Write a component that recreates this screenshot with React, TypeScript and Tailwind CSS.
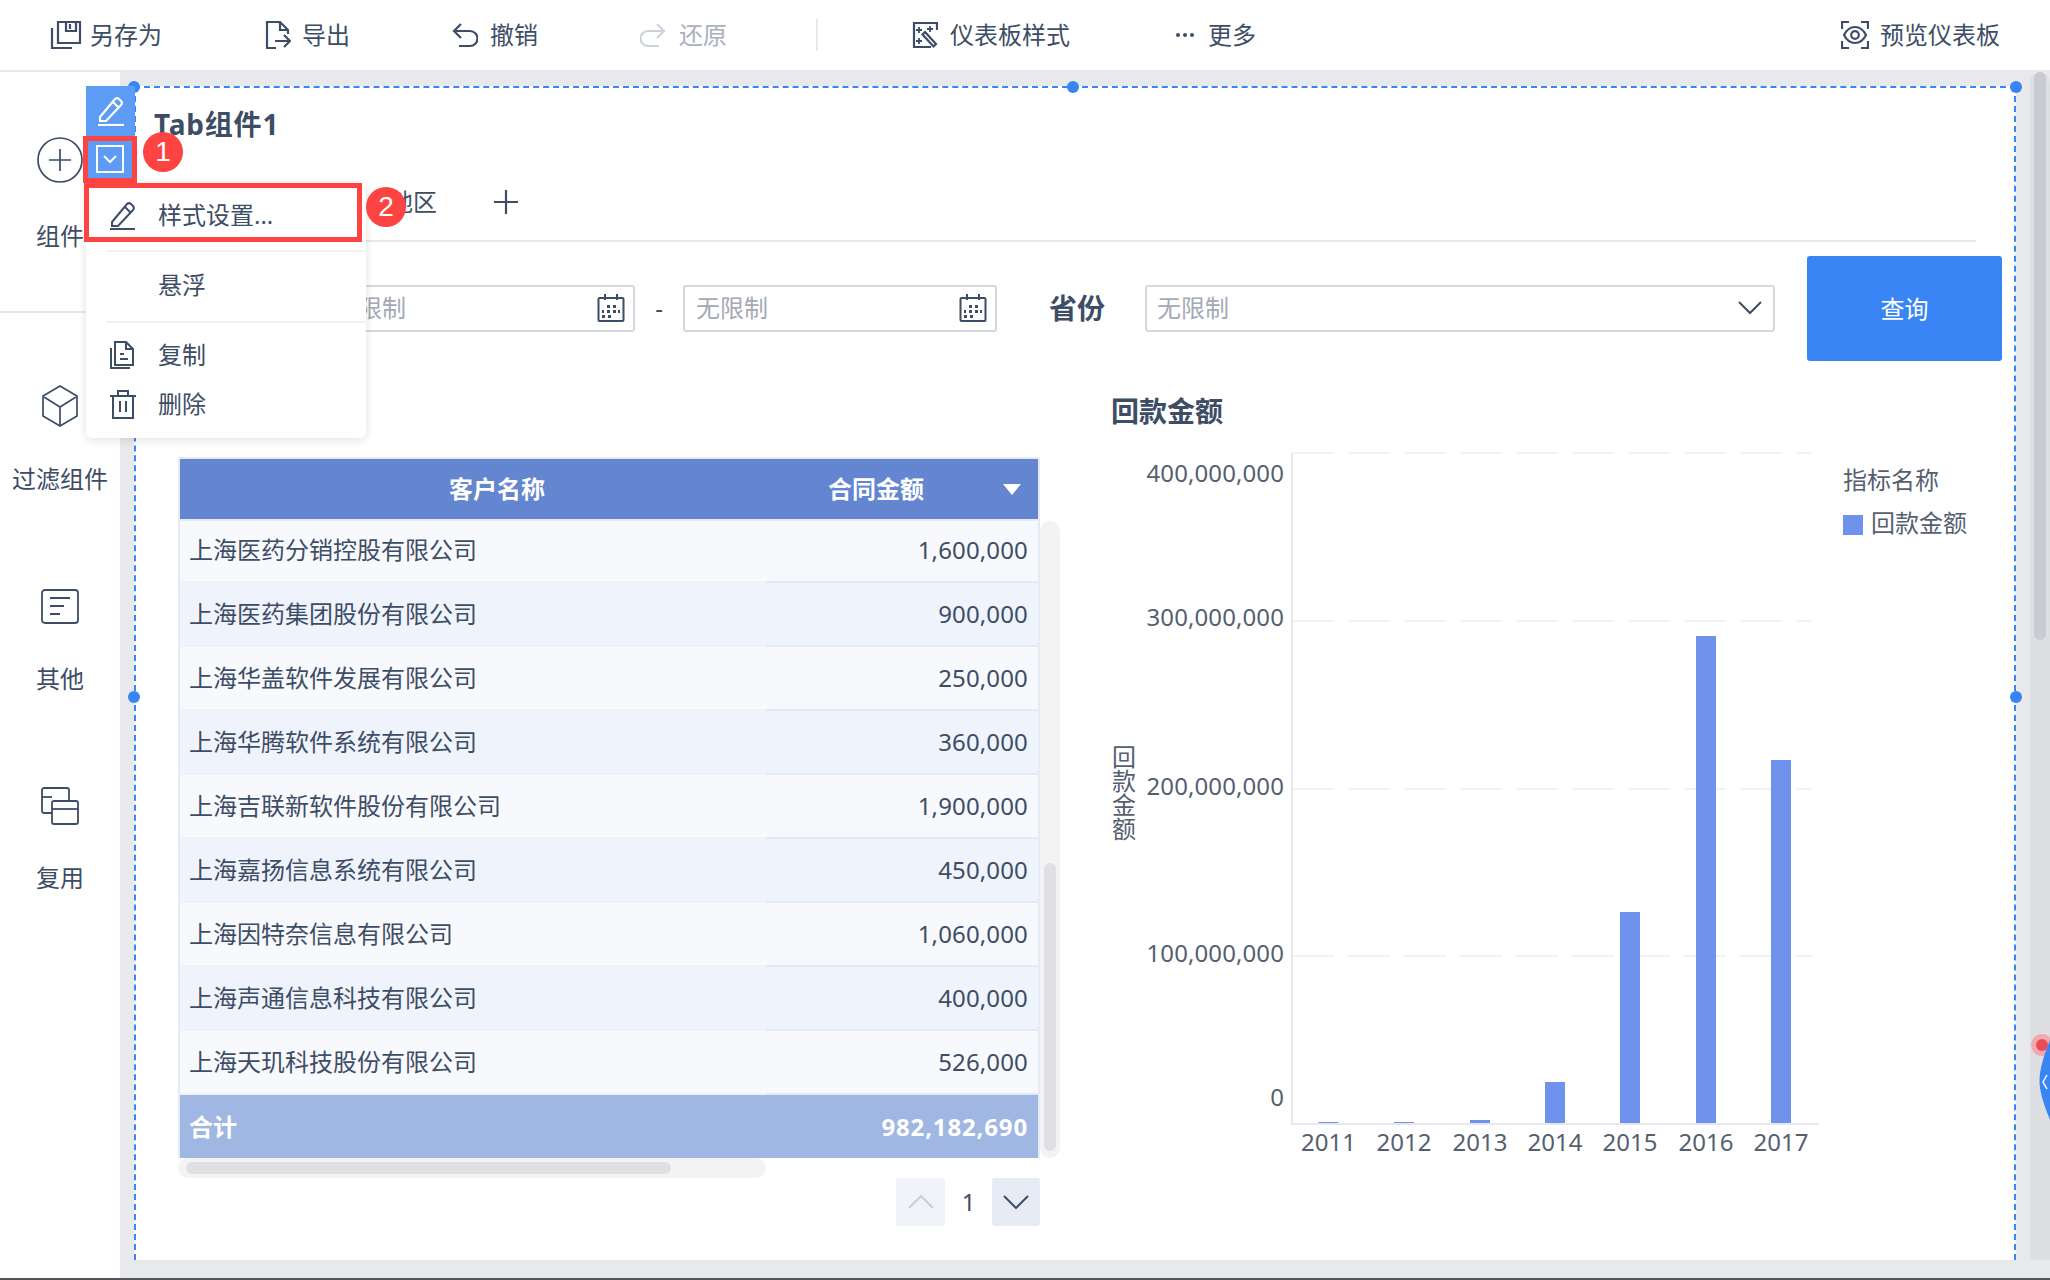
import * as React from "react";

const rows = [
  ["上海医药分销控股有限公司", "1,600,000"],
  ["上海医药集团股份有限公司", "900,000"],
  ["上海华盖软件发展有限公司", "250,000"],
  ["上海华腾软件系统有限公司", "360,000"],
  ["上海吉联新软件股份有限公司", "1,900,000"],
  ["上海嘉扬信息系统有限公司", "450,000"],
  ["上海因特奈信息有限公司", "1,060,000"],
  ["上海声通信息科技有限公司", "400,000"],
  ["上海天玑科技股份有限公司", "526,000"],
];

const bars = [
  { cx: 1328.5, top: 1122 },
  { cx: 1404, top: 1122 },
  { cx: 1480, top: 1120 },
  { cx: 1555, top: 1082 },
  { cx: 1630, top: 912 },
  { cx: 1706, top: 636 },
  { cx: 1781, top: 760 },
];

const years = ["2011", "2012", "2013", "2014", "2015", "2016", "2017"];

function CalendarIcon() {
  return (
    <svg width="28" height="30" viewBox="0 0 28 30" fill="none" stroke="#3d4d66" strokeWidth="2">
      <rect x="1.5" y="5" width="25" height="23" rx="1" />
      <path d="M8 1v6M20 1v6" />
      <path d="M10 12h3v3h-3zM16 12h3v3h-3zM10 17h3v3h-3zM16 17h3v3h-3zM5 17h2v3H5zM21 17h2v3h-2zM5 22h3v3H5zM11 22h3v3h-3z" fill="#3d4d66" stroke="none" />
    </svg>
  );
}

function DateInput({ className }: { className: string }) {
  return (
    <div className={`flex h-[47px] w-[314px] items-center justify-between rounded-[3px] border-2 border-[#d5d8de] pb-[2px] pl-[11px] pr-[8px] ${className}`}>
      <span className="text-[#a3a9b5]">无限制</span>
      <CalendarIcon />
    </div>
  );
}

function Chart() {
  return (
    <svg width="900" height="720" viewBox="1100 440 900 720" className="-ml-[11px] block" fontSize="24">
      {[453, 621, 789, 956].map((y) => (
        <line key={y} x1="1292" x2="1812" y1={y} y2={y} stroke="#f1f2f5" strokeWidth="2" strokeDasharray="42 14" />
      ))}
      <line x1="1292" x2="1292" y1="453" y2="1125" stroke="#e6e8ee" strokeWidth="2" />
      {bars.map((b) => (
        <rect key={b.cx} x={b.cx - 10} y={b.top} width="20" height={1123 - b.top} fill="#6f93ec" />
      ))}
      <line x1="1291" x2="1819" y1="1124" y2="1124" stroke="#e6e8ee" strokeWidth="2" />
      {[
        ["400,000,000", 472.5],
        ["300,000,000", 616.5],
        ["200,000,000", 785],
        ["100,000,000", 952.5],
        ["0", 1096.5],
      ].map(([t, y]) => (
        <text key={t} x="1284" y={y} textAnchor="end" dominantBaseline="central" fill="#555f70" letterSpacing="0.1">
          {t}
        </text>
      ))}
      {years.map((t, i) => (
        <text key={t} x={bars[i].cx} y="1141" textAnchor="middle" dominantBaseline="central" fill="#555f70">
          {t}
        </text>
      ))}
      <text x="1555" y="1188" textAnchor="middle" dominantBaseline="central" fill="#555f70">
        合同签约时间
      </text>
      <text x="1123" y="793" textAnchor="middle" fill="#555f70" style={{ writingMode: "vertical-rl" }}>
        回款金额
      </text>
      <text x="1843" y="479" dominantBaseline="central" fill="#555f70">
        指标名称
      </text>
      <rect x="1843" y="515" width="20" height="20" fill="#6f93ec" />
      <text x="1871" y="522" dominantBaseline="central" fill="#555f70">
        回款金额
      </text>
    </svg>
  );
}

function Toolbar() {
  return (
    <div className="flex h-[70px] items-center bg-white pl-[50px] pr-[50px]">
      <svg width="32" height="30" viewBox="0 0 32 30" fill="none" stroke="#3d4d66" strokeWidth="2.2">
        <path d="M8 2h22v21H8zM16 2v9h10V2M20 4v5" />
        <path d="M2 8v20h20" />
      </svg>
      <span className="ml-[8px]">另存为</span>

      <svg className="ml-[103px]" width="26" height="30" viewBox="0 0 26 30" fill="none" stroke="#3d4d66" strokeWidth="2.2">
        <path d="M11 28H2V2h13l8 8v4" />
        <path d="M15 2v8h8" />
        <path d="M10 21h15M19 15l6 6-6 6" />
      </svg>
      <span className="ml-[11px]">导出</span>

      <svg className="ml-[102px]" width="26" height="26" viewBox="0 0 26 26" fill="none" stroke="#3d4d66" strokeWidth="2.2">
        <path d="M9 2L2 9l7 7" />
        <path d="M2 9h16a6.8 6.8 0 0 1 0 15H7" />
      </svg>
      <span className="ml-[12px]">撤销</span>

      <svg className="ml-[102px]" width="26" height="26" viewBox="0 0 26 26" fill="none" stroke="#ccd3de" strokeWidth="2.2">
        <path d="M17 2l7 7-7 7" />
        <path d="M24 9H8a6.8 6.8 0 0 0 0 15h11" />
      </svg>
      <span className="ml-[13px] text-[#a9b1be]">还原</span>

      <div className="ml-[89px] h-[32px] w-[2px] bg-[#e8e9ed]" />

      <svg className="ml-[94px]" width="26" height="28" viewBox="0 0 26 28" fill="none" stroke="#3d4d66" strokeWidth="2.2">
        <path d="M25 9V2H2v24h17" />
        <path d="M7 6v6M4 9h6M18 5v6M15 8h6M7 17v6M4 20h6" strokeWidth="1.8" />
        <path d="M13 11l11 12-2.5 2.500L10.500 13.500z" />
      </svg>
      <span className="ml-[12px]">仪表板样式</span>

      <svg className="ml-[105px]" width="20" height="6" viewBox="0 0 20 6" fill="#3d4d66">
        <circle cx="3" cy="3" r="2" />
        <circle cx="10" cy="3" r="2" />
        <circle cx="17" cy="3" r="2" />
      </svg>
      <span className="ml-[13px]">更多</span>

      <svg className="ml-auto" width="28" height="28" viewBox="0 0 28 28" fill="none" stroke="#3d4d66" strokeWidth="2.2">
        <path d="M1 8V1h7M20 1h7v7M27 20v7h-7M8 27H1v-7" />
        <path d="M3 14c3-6 7-8 11-8s8 2 11 8c-3 6-7 8-11 8s-8-2-11-8z" />
        <circle cx="14" cy="14" r="3.800" />
      </svg>
      <span className="ml-[11px]">预览仪表板</span>
    </div>
  );
}

function Sidebar() {
  return (
    <div className="mt-[2px] flex w-[120px] shrink-0 flex-col items-center bg-white">
      <svg className="mt-[65px]" width="46" height="46" viewBox="0 0 46 46" fill="none" stroke="#3d4d66" strokeWidth="1.7">
        <circle cx="23" cy="23" r="22" />
        <path d="M23 12v22M12 23h22" />
      </svg>
      <div className="mt-[37px] h-[32px] leading-[32px]">组件</div>
      <div className="mt-[59px] h-[2px] w-full bg-[#e6e7ea]" />
      <svg className="mt-[71px]" width="38" height="44" viewBox="0 0 38 44" fill="none" stroke="#3d4d66" strokeWidth="1.7">
        <path d="M19 2l17 10v20L19 42 2 32V12z" />
        <path d="M3 13l16 10 16-10M19 23v18" />
      </svg>
      <div className="mt-[35px] h-[32px] leading-[32px]">过滤组件</div>
      <svg className="mt-[94px]" width="38" height="35" viewBox="0 0 38 35" fill="none" stroke="#3d4d66" strokeWidth="1.8">
        <rect x="1" y="1" width="36" height="33" rx="3" />
        <path d="M9 9h20M9 17h14M9 25h10" />
      </svg>
      <div className="mt-[39px] h-[32px] leading-[32px]">其他</div>
      <svg className="mt-[92px]" width="38" height="38" viewBox="0 0 38 38" fill="none" stroke="#3d4d66" strokeWidth="1.8">
        <path d="M11 26H3a2 2 0 0 1-2-2V3a2 2 0 0 1 2-2h23a2 2 0 0 1 2 2v10" />
        <path d="M1 10h10" />
        <rect x="11" y="14" width="26" height="23" rx="2" />
        <path d="M11 22h26" />
      </svg>
      <div className="mt-[37px] h-[32px] leading-[32px]">复用</div>
    </div>
  );
}

function DataTable() {
  return (
    <div className="w-[882px] shrink-0">
      <div className="flex">
        <div className="w-[862px] border-x-2 border-t-2 border-[#e6ebf6]">
          <div className="grid h-[60px] grid-cols-[586px_1fr] items-center bg-[#6485d0] font-bold text-white">
            <div className="pl-[269px]">客户名称</div>
            <div className="flex items-center pl-[62px]">
              合同金额
              <svg className="ml-[79px]" width="18" height="11" viewBox="0 0 18 11" fill="#fff">
                <path d="M0 0h18l-9 11z" />
              </svg>
            </div>
          </div>
          {rows.map(([name, amount], i) => (
            <div key={name} className={`grid h-[64px] grid-cols-[586px_1fr] ${i % 2 === 0 ? "bg-[#f8f9fd]" : "bg-[#eff3fb]"} ${i === 0 ? "border-t-2 border-[#e6ebf6]" : ""}`}>
              <div className={`flex items-center border-b-2 border-[#eef2fa] pl-[9px] ${i === 0 ? "pb-[2px]" : ""}`}>{name}</div>
              <div className={`flex items-center justify-end border-b-2 border-[#e1e8f6] pr-[10px] tracking-[0.15px] ${i === 0 ? "pb-[2px]" : ""}`}>{amount}</div>
            </div>
          ))}
          <div className="flex h-[63px] items-center justify-between bg-[#a0b6e3] pl-[9px] pr-[10px] font-bold text-white">
            <span>合计</span>
            <span className="tracking-[0.85px]">982,182,690</span>
          </div>
        </div>
        {/* vertical scrollbar */}
        <div className="mt-[64px] h-[637px] w-[20px] rounded-[10px] bg-[#f3f3f4] pt-[342px]">
          <div className="mx-auto h-[288px] w-[12px] rounded-[6px] bg-[#dfe0e4]" />
        </div>
      </div>
      <div className="h-[20px] w-[588px] rounded-[10px] bg-[#f3f3f4] pl-[8px] pt-[4px]">
        <div className="h-[12px] w-[485px] rounded-[6px] bg-[#dfe0e4]" />
      </div>
      <div className="flex w-[862px] justify-end">
        <div className="flex h-[48px] w-[49px] items-center justify-center rounded-[3px] bg-[#f0f3fa]">
          <svg width="26" height="14" viewBox="0 0 26 14" fill="none" stroke="#c9ccd1" strokeWidth="2">
            <path d="M1 13L13 1l12 12" />
          </svg>
        </div>
        <div className="flex w-[47px] items-center justify-center">1</div>
        <div className="flex h-[48px] w-[48px] items-center justify-center rounded-[3px] bg-[#e7ebf6]">
          <svg width="26" height="14" viewBox="0 0 26 14" fill="none" stroke="#3d4d66" strokeWidth="2">
            <path d="M1 1l12 12L25 1" />
          </svg>
        </div>
      </div>
    </div>
  );
}

function Canvas() {
  const handle = "absolute h-[12px] w-[12px] rounded-full bg-[#3685f2]";
  return (
    <div className="relative h-[1174px] w-[1882px] shrink-0 border-2 border-b-0 border-dashed border-[#3a85f5] bg-white">
      <div className={`${handle} -left-[8px] -top-[7px] z-20`} />
      <div className={`${handle} left-[931px] -top-[7px]`} />
      <div className={`${handle} -right-[8px] -top-[7px]`} />
      <div className={`${handle} -left-[8px] top-[603px]`} />
      <div className={`${handle} -right-[8px] top-[603px]`} />

      <div className="pl-[18px]">
        <div className="mt-[16px] h-[40px] text-[28px] font-bold leading-[40px] tracking-[0.8px]">Tab组件1</div>
        <div className="mt-[35px] flex h-[63px] w-[1822px] items-start border-b-2 border-[#e8e9ed]">
          <div className="ml-[235px] flex h-[46px] items-center">
            地区
            <svg className="ml-[57px]" width="24" height="24" viewBox="0 0 24 24" stroke="#3d4d66" strokeWidth="2.2">
              <path d="M12 0v24M0 12h24" />
            </svg>
          </div>
        </div>
        <div className="mt-[14px] flex h-[105px] items-center">
          <DateInput className="ml-[167px]" />
          <div className="w-[48px] pb-[2px] text-center">-</div>
          <DateInput className="" />
          <div className="mb-[2px] ml-[52px] text-[28px] font-bold">省份</div>
          <div className="ml-[40px] flex h-[47px] w-[630px] items-center justify-between rounded-[3px] border-2 border-[#d5d8de] pb-[2px] pl-[10px] pr-[11px]">
            <span className="text-[#a3a9b5]">无限制</span>
            <svg width="24" height="14" viewBox="0 0 24 14" fill="none" stroke="#3d4d66" strokeWidth="2">
              <path d="M1 1l11 11L23 1" />
            </svg>
          </div>
          <div className="ml-[32px] flex h-[105px] w-[195px] items-center justify-center rounded-[3px] bg-[#3a85f5] text-white">查询</div>
        </div>
      </div>

      <div className="flex pl-[42px]">
        <div className="mt-[96px]">
          <DataTable />
        </div>
        <div className="ml-[51px]">
          <div className="mt-[30px] h-[40px] text-[28px] font-bold leading-[40px]">回款金额</div>
          <div className="mt-[9px]">
            <Chart />
          </div>
        </div>
      </div>
    </div>
  );
}

function FloatMenu() {
  return (
    <>
      {/* edit button */}
      <div className="absolute left-[86px] top-[86px] z-30 flex h-[50px] w-[49px] items-center justify-center bg-[#5c9cf5]">
        <svg width="28" height="30" viewBox="0 0 28 30" fill="none" stroke="#fff" strokeWidth="2.2">
          <path d="M3 21L18 3a3 3 0 0 1 4 0l2 2a3 3 0 0 1 0 4L9 25H3z" />
          <path d="M16 6l6 6" />
          <path d="M1 29h26" />
        </svg>
      </div>
      {/* dropdown button */}
      <div className="absolute left-[83px] top-[136px] z-30 flex h-[47px] w-[54px] items-center justify-center border-[5px] border-[#fe4343] bg-[#5c9cf5]">
        <svg className="-mt-[2px]" width="28" height="28" viewBox="0 0 28 28" fill="none" stroke="#fff" strokeWidth="2">
          <rect x="1" y="1" width="26" height="26" />
          <path d="M8 11l6 6 6-6" />
        </svg>
      </div>
      {/* menu */}
      <div className="absolute left-[86px] top-[183px] z-20 w-[280px] rounded-b-[6px] bg-white pb-[9px] shadow-[0_2px_10px_rgba(0,0,0,0.12)]">
        <div className="flex h-[67px] items-center pb-[3px]">
          <svg className="ml-[24px]" width="26" height="30" viewBox="0 0 26 30" fill="none" stroke="#3d4d66" strokeWidth="2">
            <path d="M2 22L17 4a3 3 0 0 1 4 0l2 2a3 3 0 0 1 0 4L8 26H2z" />
            <path d="M15 7l6 6" />
            <path d="M0 29h25" />
          </svg>
          <span className="ml-[22px]">样式设置...</span>
        </div>
        <div className="ml-[20px] h-[2px] bg-[#f0f1f4]" />
        <div className="flex h-[69px] items-center pb-[3px] pl-[72px]">悬浮</div>
        <div className="ml-[20px] h-[2px] bg-[#f0f1f4]" />
        <div className="mt-[8px] flex h-[48px] items-center">
          <svg className="ml-[23px]" width="28" height="30" viewBox="0 0 28 30" fill="none" stroke="#3d4d66" strokeWidth="2">
            <path d="M6 25V2h11l7 7v16z" />
            <path d="M17 2v7h7M11 14h4M11 19h8" />
            <path d="M2 8v20h19" />
          </svg>
          <span className="ml-[21px]">复制</span>
        </div>
        <div className="flex h-[50px] items-center">
          <svg className="ml-[23px]" width="28" height="30" viewBox="0 0 28 30" fill="none" stroke="#3d4d66" strokeWidth="2">
            <path d="M1 7h26M9 7V2h10v5" />
            <path d="M4 7v22h20V7" />
            <path d="M11 12v11M17 12v11" />
          </svg>
          <span className="ml-[21px]">删除</span>
        </div>
      </div>
      {/* red outline over the first row */}
      <div className="absolute left-[84px] top-[183px] z-30 h-[59px] w-[278px] border-[5px] border-[#fe4343]" />
      {/* step badges */}
      <div className="absolute left-[143px] top-[132px] z-40 flex h-[40px] w-[40px] items-center justify-center rounded-full bg-[#fe4343] font-['Liberation_Sans',sans-serif] text-[28px] text-white">1</div>
      <div className="absolute left-[366px] top-[187px] z-40 flex h-[40px] w-[40px] items-center justify-center rounded-full bg-[#fe4343] font-['Liberation_Sans',sans-serif] text-[28px] text-white">2</div>
    </>
  );
}

export default function App() {
  return (
    <div className="relative flex h-[1280px] w-[2050px] flex-col overflow-hidden bg-[#e8e9ed] font-['Noto_Sans','Noto_Sans_CJK_SC',sans-serif] text-[24px] text-[#3d4d66]">
      <Toolbar />
      <div className="flex h-[1208px]">
        <Sidebar />
        <div className="ml-[14px] mt-[16px]">
          <Canvas />
        </div>
        {/* page scrollbar */}
        <div className="ml-[14px] mt-[2px] h-[1188px] w-[20px] rounded-t-[10px] bg-[#dedfe3]">
          <div className="mx-auto h-[568px] w-[12px] rounded-[6px] bg-[#c9cbd1]" />
        </div>
      </div>
      <div className="mt-auto h-[2px] bg-[#555555]" />

      <FloatMenu />

      {/* assistant bubble at the page edge */}
      <svg className="absolute left-[2030px] top-[1030px]" width="20" height="100" viewBox="0 0 20 100">
        <circle cx="12" cy="15" r="11" fill="#f2a9ad" />
        <circle cx="12" cy="15" r="6" fill="#ec4d55" />
        <path d="M20 10C12 30 8 45 10 58c2 12 6 22 10 32z" fill="#3a85f5" />
        <path d="M17 45l-4 7 4 7" fill="none" stroke="#fff" strokeWidth="1.500" />
      </svg>
    </div>
  );
}
